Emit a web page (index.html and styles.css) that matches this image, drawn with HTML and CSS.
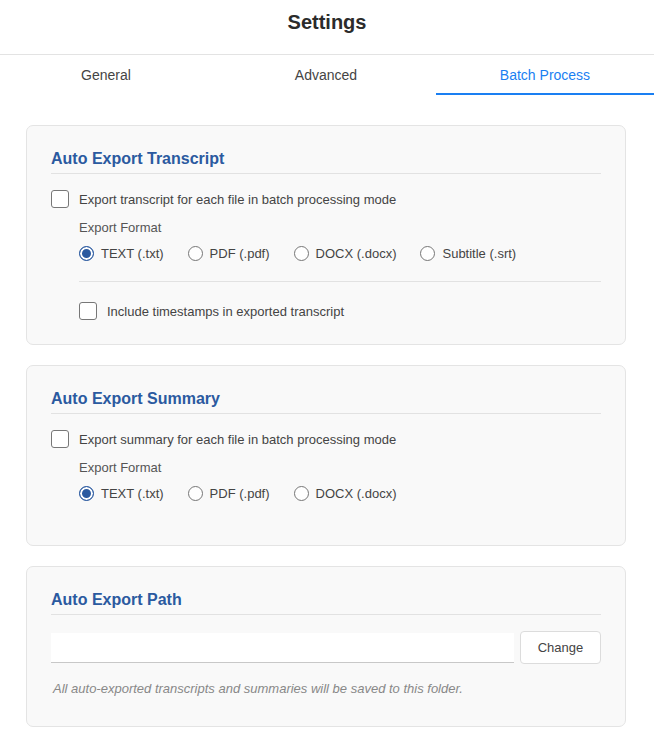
FILE: index.html
```html
<!DOCTYPE html>
<html>
<head>
<meta charset="utf-8">
<link rel="stylesheet" href="styles.css">
</head>
<body>
<div class="app">
  <header class="header"><h1 class="title">Settings</h1></header>
  <nav class="tabs">
    <div class="tab">General</div>
    <div class="tab mid">Advanced</div>
    <div class="tab active">Batch Process</div>
  </nav>
  <main class="content">
    <section class="card">
      <h2 class="card-title">Auto Export Transcript</h2>
      <label class="check-row"><span class="checkbox"></span><span>Export transcript for each file in batch processing mode</span></label>
      <div class="sub">
        <div class="sub-label">Export Format</div>
        <div class="radios">
          <label class="radio-item"><span class="radio checked"></span>TEXT (.txt)</label>
          <label class="radio-item"><span class="radio"></span>PDF (.pdf)</label>
          <label class="radio-item"><span class="radio"></span>DOCX (.docx)</label>
          <label class="radio-item"><span class="radio"></span>Subtitle (.srt)</label>
        </div>
        <div class="sub-divider"></div>
        <label class="check-row ts"><span class="checkbox"></span><span>Include timestamps in exported transcript</span></label>
      </div>
    </section>
    <section class="card">
      <h2 class="card-title">Auto Export Summary</h2>
      <label class="check-row"><span class="checkbox"></span><span>Export summary for each file in batch processing mode</span></label>
      <div class="sub">
        <div class="sub-label">Export Format</div>
        <div class="radios last">
          <label class="radio-item"><span class="radio checked"></span>TEXT (.txt)</label>
          <label class="radio-item"><span class="radio"></span>PDF (.pdf)</label>
          <label class="radio-item"><span class="radio"></span>DOCX (.docx)</label>
        </div>
      </div>
    </section>
    <section class="card">
      <h2 class="card-title">Auto Export Path</h2>
      <div class="path-row">
        <div class="path-input"></div>
        <button class="btn">Change</button>
      </div>
      <p class="hint">All auto-exported transcripts and summaries will be saved to this folder.</p>
    </section>
  </main>
</div>
</body>
</html>
```

FILE: styles.css
```css
html, body {
  margin: 0;
  padding: 0;
  background: #ffffff;
}
body {
  font-family: "Liberation Sans", Arial, sans-serif;
  color: #444;
}
.app {
  width: 654px;
}
.header {
  height: 54px;
  border-bottom: 1px solid #e3e3e3;
  display: flex;
  align-items: center;
  justify-content: center;
}
.title {
  margin: 0;
  font-size: 20px;
  font-weight: bold;
  color: #2b2b2b;
  position: relative;
  top: -5px;
}
.tabs {
  display: grid;
  grid-template-columns: 212px 224px 218px;
}
.tab {
  height: 36px;
  padding-top: 2px;
  display: flex;
  align-items: center;
  justify-content: center;
  font-size: 14px;
  color: #444;
  border-bottom: 2px solid transparent;
}
.tab.mid {
  padding-left: 4px;
}
.tab.active {
  color: #1a7ff2;
  border-bottom-color: #1a7ff2;
}
.content {
  padding: 30px 0 20px 26px;
  display: flex;
  flex-direction: column;
  gap: 20px;
}
.card {
  width: 550px;
  background: #f9f9f9;
  border: 1px solid #e4e4e4;
  border-radius: 7px;
  padding: 24px 24px 24px 24px;
}
.card-title {
  margin: 0;
  font-size: 16px;
  font-weight: bold;
  color: #2b5aa0;
  padding-bottom: 5px;
  border-bottom: 1px solid #e2e2e2;
}
.check-row {
  display: flex;
  align-items: center;
  gap: 10px;
  margin-top: 16px;
  font-size: 13px;
  color: #444;
}
.checkbox {
  width: 16px;
  height: 16px;
  border: 1px solid #777;
  border-radius: 3px;
  background: #fff;
  flex: none;
}
.sub {
  padding-left: 28px;
}
.sub-label {
  font-size: 13px;
  color: #555;
  margin-top: 12px;
}
.radios {
  display: flex;
  gap: 24px;
  margin-top: 11px;
  margin-bottom: 20px;
  font-size: 13px;
  color: #444;
}
.radio-item {
  display: flex;
  align-items: center;
  gap: 7px;
}
.radio {
  width: 13px;
  height: 13px;
  border: 1px solid #767676;
  border-radius: 50%;
  background: #fff;
  flex: none;
}
.radio.checked {
  border-color: #2b5aa0;
  background: #2b5aa0;
  box-shadow: inset 0 0 0 2px #fff;
}
.sub-divider {
  border-top: 1px solid #e2e2e2;
}
.check-row.ts {
  margin-top: 20px;
}
.path-row {
  display: flex;
  align-items: center;
  gap: 6px;
  margin-top: 16px;
}
.path-input {
  flex: 1;
  height: 29px;
  background: #fff;
  border-bottom: 1px solid #c8c8c8;
}
.btn {
  width: 81px;
  height: 33px;
  background: #fff;
  border: 1px solid #dcdcdc;
  border-radius: 4px;
  font-family: "Liberation Sans", Arial, sans-serif;
  font-size: 13px;
  color: #444;
  padding: 0;
}
.hint {
  margin: 17px 0 6px 2px;
  font-size: 13px;
  font-style: italic;
  color: #888;
}
```
